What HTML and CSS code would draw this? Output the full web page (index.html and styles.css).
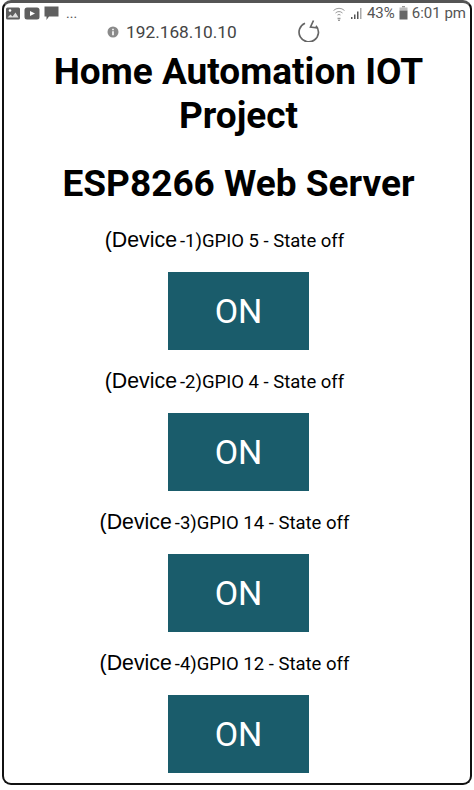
FILE: index.html
```html
<!DOCTYPE html>
<html>
<head>
	<title>ESP8266 Web Server</title>
	<link rel="stylesheet" href="styles.css">
</head>
<body>
	<div class="phone">
		<div class="status-bar">
			<div class="status-left">
				<svg class="icon" width="14" height="13" viewBox="0 0 14 13"><rect x="0" y="0.5" width="14" height="12" rx="1.500" fill="#5f5f5f"/><circle cx="4" cy="3.500" r="1.300" fill="#fff"/><path d="M1.500 10.500l3-3 2 2 3-4 3 5z" fill="#ddd"/></svg>
				<svg class="icon" width="16" height="13" viewBox="0 0 16 13"><rect x="0.500" y="0.500" width="15" height="12" rx="2.500" fill="#5f5f5f"/><path d="M6 4l5 2.500-5 2.500z" fill="#fff"/></svg>
				<svg class="icon" width="15" height="15" viewBox="0 0 15 15"><path d="M0.500 0.500h14v10h-9.500l-2.500 3.500v-3.500h-2z" fill="#5f5f5f"/></svg>
				<span class="dots">...</span>
			</div>
			<div class="status-right">
				<svg class="icon" width="14" height="15" viewBox="0 0 13 15" fill="none" stroke="#9a9a9a" stroke-width="1"><path d="M1 4.500a8 8 0 0 1 11 0"/><path d="M3 7a5 5 0 0 1 7 0"/><path d="M5 9a2.500 2.500 0 0 1 3 0"/><path d="M5 12.500h3M5.500 14.500h2" stroke-width="1.500"/></svg>
				<svg class="icon" width="13" height="13" viewBox="0 0 13 13"><path d="M1 10h1.500v2h-1.500zM4 7.500h1.500v4.500h-1.500zM7 4.500h1.500v7.500h-1.500z" fill="#555"/><path d="M10 1h1.500v11h-1.500z" fill="#aaa"/></svg>
				<span class="status-text">43%</span>
				<svg class="icon" width="9" height="14" viewBox="0 0 9 14"><path d="M3 0h3v1.500h-3z" fill="#999"/><path d="M0.500 1.500h8v3h-8z" fill="#bbb"/><path d="M0.500 4.500h8v9h-8z" fill="#666"/></svg>
				<span class="status-text">6:01 pm</span>
			</div>
		</div>
		<div class="url-bar">
			<svg class="icon" width="12" height="12" viewBox="0 0 12 12"><circle cx="6" cy="6" r="5.500" fill="#8a8a8a"/><path d="M5.200 5.200h1.600v4h-1.600zM5.200 2.700h1.600v1.500h-1.600z" fill="#fff"/></svg>
			<span class="url">192.168.10.10</span>
			<svg class="reload" width="23" height="23" viewBox="0 0 23 23" fill="none" stroke="#666" stroke-width="1.700"><path d="M7 4.200a9.700 9.700 0 1 0 11 2.500"/><path d="M15.500 1.500l-3 6.500 7.500 1"/></svg>
		</div>
		<div class="content">
			<h1>Home Automation IOT Project</h1>
			<h1 class="server-title">ESP8266 Web Server</h1>

			<div class="device">
				<p><span class="device-name">(Device</span><span class="device-num">-1)</span>GPIO 5 - State off</p>
				<button class="on-btn">ON</button>
			</div>
			<div class="device">
				<p><span class="device-name">(Device</span><span class="device-num">-2)</span>GPIO 4 - State off</p>
				<button class="on-btn">ON</button>
			</div>
			<div class="device">
				<p><span class="device-name">(Device</span><span class="device-num">-3)</span>GPIO 14 - State off</p>
				<button class="on-btn">ON</button>
			</div>
			<div class="device">
				<p><span class="device-name">(Device</span><span class="device-num">-4)</span>GPIO 12 - State off</p>
				<button class="on-btn">ON</button>
			</div>
		</div>
	</div>
</body>
</html>
```
FILE: styles.css
```css
body {
	background-color: #ffffff;
	font-family: Roboto, Arial, sans-serif;
	margin: 0;
	padding: 0;
}

.phone {
	box-sizing: border-box;
	width: 470px;
	height: 785px;
	margin: 0 2px;
	border: 2px solid #111111;
	border-top: 3px solid #555555;
	border-radius: 9px;
	overflow: hidden;
}

.icon {
	display: block;
	flex-shrink: 0;
}

.status-bar {
	display: flex;
	justify-content: space-between;
	align-items: center;
	height: 18px;
	padding: 1px 4px 0 2px;
	color: #555555;
}

.status-left,
.status-right {
	display: flex;
	align-items: center;
	gap: 4px;
}

.dots {
	font-size: 14px;
	margin-left: 3px;
}

.status-text {
	font-size: 15px;
	line-height: 18px;
}

.url-bar {
	display: flex;
	align-items: center;
	height: 20px;
	padding-left: 103px;
	color: #444444;
}

.url {
	font-size: 17.3px;
	margin-left: 7px;
}

.reload {
	margin-left: 61px;
	margin-top: -3px;
}

.content {
	padding-left: 3px;
	text-align: center;
	color: #000000;
}

h1 {
	font-size: 37px;
	line-height: 44px;
	font-weight: 700;
	margin: 8px 30px 0;
}

.server-title {
	margin-top: 24px;
	margin-bottom: 22px;
}

.device {
	display: flex;
	flex-direction: column;
	align-items: center;
	height: 141px;
}

.device p {
	font-size: 18.5px;
	line-height: 24px;
	margin: 0 0 19px;
	padding-right: 28px;
}

.device-name {
	font-family: "Liberation Sans", Arial, sans-serif;
	font-size: 21.3px;
}

.device-num {
	margin-left: 3px;
}

.on-btn {
	width: 141px;
	height: 78px;
	background-color: #1a5c6b;
	color: #ffffff;
	border: none;
	padding: 0;
	font-family: Roboto, Arial, sans-serif;
	font-size: 34px;
}
```
